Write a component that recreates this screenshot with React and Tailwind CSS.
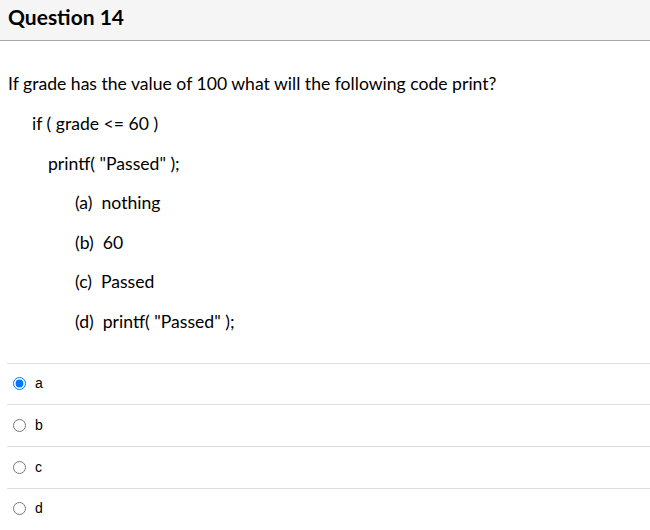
import React from "react";

const lines = [
  { text: "if ( grade <= 60 )", indent: "pl-[32px]" },
  { text: 'printf( "Passed" );', indent: "pl-[48px]" },
  { text: "(a)\u00a0\u00a0nothing", indent: "pl-[75px]" },
  { text: "(b)\u00a0\u00a060", indent: "pl-[75px]" },
  { text: "(c)\u00a0\u00a0Passed", indent: "pl-[75px]" },
  { text: '(d)\u00a0\u00a0printf( "Passed" );', indent: "pl-[75px]" },
];

const answers = ["a", "b", "c", "d"];

export default function App() {
  return (
    <div className="w-[650px] h-[530px] bg-white overflow-hidden text-[#2d3b45] font-['Lato','Noto_Sans',sans-serif]">
      {/* header bar */}
      <div className="h-[41px] bg-[#f5f5f5] border-b border-[#a8a8a8] flex items-center px-[8px]">
        <h2 className="text-[21px] font-bold text-black leading-none -mt-[8px]">Question 14</h2>
      </div>

      {/* question body */}
      <div className="pt-[23px] text-black text-[17.6px]">
        <p className="pl-[8px] leading-[40px]">
          If grade has the value of 100 what will the following code print?
        </p>
        {lines.map((l, i) => (
          <p key={i} className={`${l.indent} leading-[39.6px]`}>
            {l.text}
          </p>
        ))}
      </div>

      {/* answers */}
      <div className="mt-[21px] ml-[7px]">
        {answers.map((a, i) => (
          <label
            key={a}
            className="h-[41.7px] border-t border-[#dddddd] flex items-center gap-[9px] pl-[6px]"
          >
            <input
              type="radio"
              name="q14"
              defaultChecked={i === 0}
              className="m-0 w-[13px] h-[13px]"
            />
            <span className="text-[14px] text-black font-['Liberation_Sans',Arial,sans-serif]">{a}</span>
          </label>
        ))}
      </div>
    </div>
  );
}
